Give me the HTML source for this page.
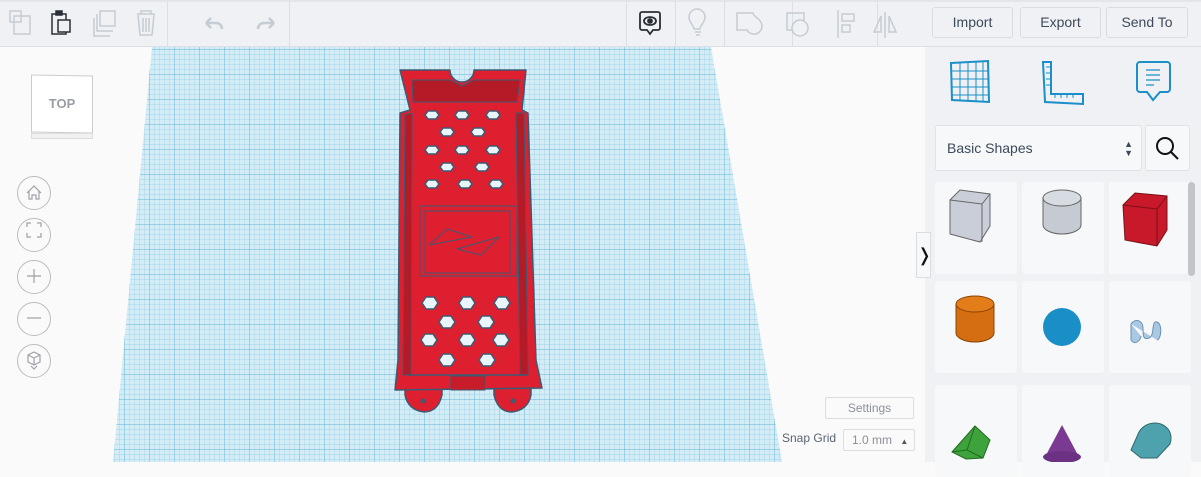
<!DOCTYPE html>
<html><head><meta charset="utf-8"><style>
*{box-sizing:border-box;margin:0;padding:0}
body{width:1201px;height:462px;overflow:hidden;background:#fafafa;font-family:"Liberation Sans",sans-serif;position:relative}
.abs{position:absolute}
.tb{left:0;top:0;width:1201px;height:47px;background:#f0f1f4;border-bottom:1px solid #dcdfe4;border-top:2px solid #e3e5ea}
.sep{top:0;width:1px;height:46px;background:#dcdfe4}
.btn{top:7px;height:31px;border:1px solid #d9dce1;border-radius:3px;background:#f0f1f4;color:#3c4a5a;font-size:14px;text-align:center;line-height:29px}
.panel{left:925px;top:47px;width:276px;height:415px;background:#f0f1f4}
.card{width:82px;height:92px;background:#f7f8f9;border-radius:3px}
.circ{left:17px;width:34px;height:34px;border:1px solid #b9bcc2;border-radius:50%;background:#fafafa}
</style></head><body>
<svg class="abs" style="left:0;top:0" width="1201" height="462">
<defs>
<pattern id="g" width="5" height="5" patternUnits="userSpaceOnUse"><rect width="5" height="5" fill="#d3ecf6"/><path d="M5 0V5M0 5H5" stroke="#94cfe6" stroke-width="0.7"/></pattern>
<pattern id="G" width="25" height="25" patternUnits="userSpaceOnUse"><rect width="25" height="25" fill="url(#g)"/><path d="M25 0V25M0 25H25" stroke="#5fb4d6" stroke-width="0.9"/></pattern>
</defs>
<polygon points="152,47 711,47 782,462 113,462" fill="url(#G)"/>
<g stroke="#3d5a73" stroke-width="1.5" stroke-linejoin="round">
<path d="M405 385 L442 385 L442 395 Q438 412 424 412 Q408 410 405 395 Z" fill="#dd1f30"/>
<path d="M494 385 L531 385 L531 395 Q528 410 512 412 Q498 412 494 395 Z" fill="#dd1f30"/>
<path d="M400 70 L450 70 A12 12 0 0 0 474 70 L526 70 L522 110 L528 113 L536 360 L542 388 L395 390 L398 360 L400 113 L410 110 Z" fill="#dd1f30"/>
<polygon points="412,80 450,80 462,86 474,80 520,80 517,102 413,102" fill="#b51a27" stroke-width="1"/>
<polygon points="405,115 412,113 411,375 403,375" fill="#b51a27" stroke-width="1"/>
<polygon points="516,113 524,113 528,375 520,375" fill="#b51a27" stroke-width="1"/>
<line x1="408" y1="375" x2="528" y2="375"/>
<rect x="451" y="376" width="34" height="14" fill="#c81c2a" stroke-width="1"/>
<rect x="420" y="206" width="97" height="70" fill="#dd1f30" stroke-width="1"/>
<rect x="425" y="211" width="85" height="62" fill="#dd1f30" stroke-width="1"/>
<path d="M429 245 L447 229 L472 237 Z M457 249 L499 237 L481 255 Z" fill="none" stroke-width="1"/>
</g>
<circle cx="423" cy="401" r="2.5" fill="#3d5a73"/><circle cx="513" cy="401" r="2.5" fill="#3d5a73"/>
<g fill="#e8f6fb" stroke="#3d5a73" stroke-width="1.5">
<polygon transform="translate(432,115)" points="-7,0 -4,-4 4,-4 7,0 4,4 -4,4"/>
<polygon transform="translate(462,115)" points="-7,0 -4,-4 4,-4 7,0 4,4 -4,4"/>
<polygon transform="translate(493,115)" points="-7,0 -4,-4 4,-4 7,0 4,4 -4,4"/>
<polygon transform="translate(447,132)" points="-7,0 -4,-4 4,-4 7,0 4,4 -4,4"/>
<polygon transform="translate(478,132)" points="-7,0 -4,-4 4,-4 7,0 4,4 -4,4"/>
<polygon transform="translate(432,150)" points="-7,0 -4,-4 4,-4 7,0 4,4 -4,4"/>
<polygon transform="translate(462,150)" points="-7,0 -4,-4 4,-4 7,0 4,4 -4,4"/>
<polygon transform="translate(493,150)" points="-7,0 -4,-4 4,-4 7,0 4,4 -4,4"/>
<polygon transform="translate(447,167)" points="-7,0 -4,-4 4,-4 7,0 4,4 -4,4"/>
<polygon transform="translate(482,167)" points="-7,0 -4,-4 4,-4 7,0 4,4 -4,4"/>
<polygon transform="translate(432,184)" points="-7,0 -4,-4 4,-4 7,0 4,4 -4,4"/>
<polygon transform="translate(465,184)" points="-7,0 -4,-4 4,-4 7,0 4,4 -4,4"/>
<polygon transform="translate(496,184)" points="-7,0 -4,-4 4,-4 7,0 4,4 -4,4"/>
<polygon transform="translate(430,303)" points="-8,0 -4,-6 4,-6 8,0 4,6 -4,6"/>
<polygon transform="translate(467,303)" points="-8,0 -4,-6 4,-6 8,0 4,6 -4,6"/>
<polygon transform="translate(502,303)" points="-8,0 -4,-6 4,-6 8,0 4,6 -4,6"/>
<polygon transform="translate(447,322)" points="-8,0 -4,-6 4,-6 8,0 4,6 -4,6"/>
<polygon transform="translate(486,322)" points="-8,0 -4,-6 4,-6 8,0 4,6 -4,6"/>
<polygon transform="translate(429,340)" points="-8,0 -4,-6 4,-6 8,0 4,6 -4,6"/>
<polygon transform="translate(467,340)" points="-8,0 -4,-6 4,-6 8,0 4,6 -4,6"/>
<polygon transform="translate(501,340)" points="-8,0 -4,-6 4,-6 8,0 4,6 -4,6"/>
<polygon transform="translate(447,360)" points="-8,0 -4,-6 4,-6 8,0 4,6 -4,6"/>
<polygon transform="translate(487,360)" points="-8,0 -4,-6 4,-6 8,0 4,6 -4,6"/>
</g>
</svg>
<div class="abs tb"></div>
<div class="abs sep" style="left:167px"></div><div class="abs sep" style="left:289px"></div>
<div class="abs sep" style="left:626px"></div><div class="abs sep" style="left:675px"></div><div class="abs sep" style="left:724px"></div><div class="abs sep" style="left:792px"></div><div class="abs sep" style="left:877px"></div>
<svg class="abs" style="left:0;top:0" width="900" height="46" fill="none" stroke-width="1.5">
<g stroke="#c5ccd4"><rect x="10" y="11" width="11" height="11"/><rect x="14" y="16" width="16" height="18"/></g>
<g stroke="#2a2f36"><rect x="52" y="14" width="14" height="20"/><rect x="58" y="20" width="12" height="12" fill="#f0f1f4"/><rect x="56" y="11" width="6" height="4" fill="#2a2f36"/></g>
<g stroke="#c5ccd4"><rect x="100" y="11" width="15" height="15"/><path d="M97 14v17h16"/><path d="M94 18v18h16"/></g>
<g stroke="#c5ccd4"><path d="M137 14h18M141 14v-3h10v3M138 15l2 20h12l2-20M143 18v14M146 18v14M149 18v14"/></g>
<path d="M206 23h10c4 0 6 3 6 6M206 23l5-5M206 23l5 5" stroke="#c5ccd4" stroke-width="2.5"/>
<path d="M274 23h-10c-4 0-6 3-6 6M274 23l-5-5M274 23l-5 5" stroke="#c5ccd4" stroke-width="2.5"/>
<g stroke="#2a2f36" stroke-width="1.8"><path d="M642 12h16a2 2 0 0 1 2 2v14a2 2 0 0 1-2 2h-5l-3 4-3-4h-5a2 2 0 0 1-2-2v-14a2 2 0 0 1 2-2z"/><ellipse cx="650" cy="21" rx="6" ry="4"/><circle cx="650" cy="21" r="2" fill="#2a2f36"/></g>
<g stroke="#c5ccd4"><path d="M694 29c0-4-5-6-5-12a8 8 0 0 1 16 0c0 6-5 8-5 12zM695 32h6M696 35h4"/></g>
<g stroke="#c5ccd4"><path d="M737 13h16c0 4 9 6 9 13a8 8 0 0 1-15 4h-10z"/></g>
<g stroke="#c5ccd4"><rect x="787" y="13" width="17" height="17"/><circle cx="800" cy="28" r="8" fill="#f0f1f4"/></g>
<g stroke="#c5ccd4"><path d="M838 10v28"/><rect x="842" y="14" width="12" height="7"/><rect x="842" y="25" width="8" height="7"/></g>
<g stroke="#c5ccd4"><path d="M885 12v26M881 16l-7 16h7zM889 16l7 16h-7z"/></g>
</svg>
<div class="abs btn" style="left:932px;width:81px">Import</div>
<div class="abs btn" style="left:1020px;width:81px">Export</div>
<div class="abs btn" style="left:1106px;width:82px">Send To</div>
<div class="abs" style="left:31px;top:75px;width:62px;height:58px;background:#fff;border:1px solid #ccc;transform:skewY(1deg)"></div>
<div class="abs" style="left:31px;top:133px;width:62px;height:6px;background:#f1f1f1;border:1px solid #ddd"></div>
<div class="abs" style="left:31px;top:96px;width:62px;text-align:center;font-weight:bold;font-size:13px;color:#9a9ea5">TOP</div>
<div class="abs circ" style="top:176px"></div><div class="abs circ" style="top:218px"></div><div class="abs circ" style="top:260px"></div><div class="abs circ" style="top:302px"></div><div class="abs circ" style="top:344px"></div>
<svg class="abs" style="left:17px;top:176px" width="34" height="204" fill="none" stroke="#9da1a7" stroke-width="1.2">
<path d="M10 17l7-7 7 7M12 15v8h3v-4h4v4h3v-8"/>
<path d="M10 51v-4h4M24 51v-4h-4M10 57v4h4M24 57v4h-4"/>
<path d="M17 93v14M10 100h14"/>
<path d="M10 142h14"/>
<path d="M17 176l6 3v7l-6 3-6-3v-7zM11 179l6 3 6-3M17 182v7M14 190l3 3 3-3"/>
</svg>
<div class="abs" style="left:825px;top:397px;width:89px;height:22px;border:1px solid #dcdde0;border-radius:2px;background:#fafafa;color:#8a9099;font-size:12px;text-align:center;line-height:20px">Settings</div>
<div class="abs" style="left:782px;top:431px;font-size:12px;color:#5a6472">Snap Grid</div>
<div class="abs" style="left:843px;top:429px;width:72px;height:22px;border:1px solid #dcdde0;border-radius:2px;background:#fafafa;color:#8a9099;font-size:12px;line-height:20px;padding-left:8px">1.0 mm <span style="font-size:8px;margin-left:5px;color:#555">▲</span></div>
<div class="abs panel"></div>
<div class="abs" style="left:916px;top:232px;width:15px;height:46px;background:#f7f8f9;border:1px solid #d9dce1;font-size:18px;line-height:44px;text-align:center;color:#111">❭</div>
<svg class="abs" style="left:940px;top:55px" width="240" height="55" fill="none" stroke="#1a8fc9" stroke-width="2">
<path d="M11 8l37-2 1 41-37-2z"/><path d="M11 16h38M11 24h38M11 32h38M11 40h38M20 7v38M28 7v39M36 7v39M43 6v40" stroke-width="1"/>
<path d="M103 7h8v32h32v10l-38-2z"/><path d="M106 12h4M106 18h4M106 24h4M106 30h4M115 39v4M121 39v4M127 39v4M133 39v4" stroke-width="1"/>
<path d="M200 7h27a3 3 0 0 1 3 3v24a3 3 0 0 1-3 3h-7l-7 8-6-8h-7a3 3 0 0 1-3-3v-24a3 3 0 0 1 3-3z"/><path d="M206 15h14M206 20h14M206 25h14M206 30h8" stroke-width="1.3"/>
</svg>
<div class="abs" style="left:935px;top:125px;width:207px;height:46px;background:#f7f8f9;border:1px solid #e0e2e6;border-radius:3px;font-size:14px;color:#3c4a5a;line-height:44px;padding-left:11px">Basic Shapes<span style="position:absolute;right:8px;top:0;font-size:9px;line-height:9px;padding-top:14px">▲<br>▼</span></div>
<div class="abs" style="left:1145px;top:125px;width:45px;height:46px;background:#f7f8f9;border:1px solid #e0e2e6;border-radius:3px"></div>
<svg class="abs" style="left:1145px;top:125px" width="45" height="46" fill="none" stroke="#111" stroke-width="2"><circle cx="20" cy="21" r="8"/><path d="M26 27l7 7"/></svg>
<div class="abs card" style="left:935px;top:182px"></div><div class="abs card" style="left:1022px;top:182px"></div><div class="abs card" style="left:1109px;top:182px"></div>
<div class="abs card" style="left:935px;top:281px"></div><div class="abs card" style="left:1022px;top:281px"></div><div class="abs card" style="left:1109px;top:281px"></div>
<div class="abs card" style="left:935px;top:385px"></div><div class="abs card" style="left:1022px;top:385px"></div><div class="abs card" style="left:1109px;top:385px"></div>
<div class="abs" style="left:1188px;top:182px;width:7px;height:94px;background:#c2c4c7;border-radius:4px"></div>
<svg class="abs" style="left:935px;top:182px" width="256" height="280" stroke-width="1">
<polygon points="15,18 25,8 55,12 55,44 45,60 15,52" fill="#c9ced8" stroke="#666"/><path d="M15 18l32 4 8-10M47 22v38" fill="none" stroke="#666"/>
<path d="M108 15v28c0 5 9 9 19 9s19-4 19-9v-28" fill="#c5cad3" stroke="#666"/><ellipse cx="127" cy="16" rx="19" ry="8" fill="#d7dbe2" stroke="#666"/>
<polygon points="188,23 200,11 232,14 232,48 222,64 190,58" fill="#c8192b" stroke="#7a1018"/><path d="M188 23l34 4 10-13M222 27v37" fill="none" stroke="#7a1018"/>
<path d="M21 122v29c0 5 9 9 19 9s19-4 19-9v-29" fill="#d56e12" stroke="#8a4508"/><ellipse cx="40" cy="122" rx="19" ry="8" fill="#e27d1a" stroke="#8a4508"/>
<circle cx="127" cy="145" r="19" fill="#1a8fc7"/>
<path d="M196 142c4-6 12-4 12 4s0 12 6 10 2-18 8-16 4 18 0 18M196 142v16c4 6 10 0 10-4" fill="#a9c8e3" stroke="#6e90b0"/>
<polygon points="17,270 40,244 55,258 48,276 31,277" fill="#3fa33d" stroke="#216b1f"/><path d="M17 270l15-2 16 8M32 268l8-24" fill="none" stroke="#216b1f"/>
<polygon points="127,243 110,275 144,275" fill="#7a3a92"/><ellipse cx="127" cy="275" rx="19" ry="6" fill="#6d3184"/>
<path d="M196 268l8-18c6-10 20-12 28-4 4 4 5 10 3 16l-13 14h-16z" fill="#4ea2ad" stroke="#2f6870"/>
</svg>
</body></html>
